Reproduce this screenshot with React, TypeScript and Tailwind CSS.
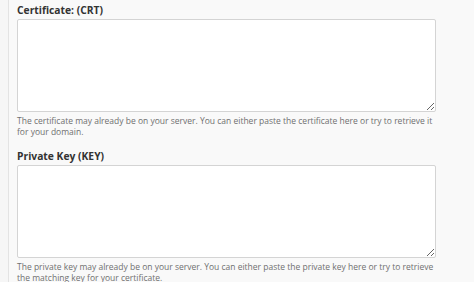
export default function App() {
	return (
		<div
			className="flex w-[474px] h-[282px] overflow-hidden bg-[#f4f4f4]"
			style={{ fontFamily: '"Open Sans", sans-serif' }}
		>
			<div className="w-[9px] shrink-0 bg-[#f6f6f6] border-r border-[#e3e3e3]" />
			<div className="flex-1 bg-[#f9f9f9] pl-[8px] pt-[3px]">
				<Field
					label="Certificate: (CRT)"
					help="The certificate may already be on your server. You can either paste the certificate here or try to retrieve it for your domain."
				/>
				<div className="h-[12px]" />
				<Field
					label="Private Key (KEY)"
					help="The private key may already be on your server. You can either paste the private key here or try to retrieve the matching key for your certificate."
				/>
			</div>
		</div>
	);
}

function Field({ label, help }: { label: string; help: string }) {
	return (
		<div className="flex flex-col">
			<label className="text-[10.3px] leading-[14px] font-bold text-[#333]">{label}</label>
			<textarea className="mt-[2px] w-[419px] h-[93px] bg-white border border-[#d4d4d4] rounded-[2px] resize-y" />
			<p className="mt-[3px] w-[420px] text-[8.5px] leading-[11px] text-[#707070]">{help}</p>
		</div>
	);
}
